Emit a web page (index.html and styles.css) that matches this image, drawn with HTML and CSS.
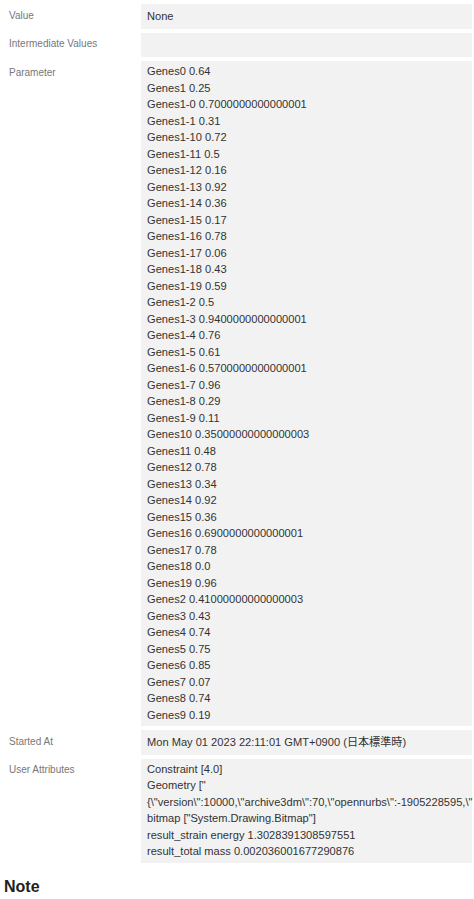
FILE: index.html
```html
<!DOCTYPE html>
<html lang="en">
<head>
<meta charset="utf-8">
<title>Trial</title>
<link rel="stylesheet" href="styles.css">
</head>
<body>
<div class="page">
  <div class="table">
    <div class="label">Value</div>
    <div class="cell"><div>None</div></div>

    <div class="label">Intermediate Values</div>
    <div class="cell"></div>

    <div class="label">Parameter</div>
    <div class="cell">
      <div>Genes0 0.64</div>
      <div>Genes1 0.25</div>
      <div>Genes1-0 0.7000000000000001</div>
      <div>Genes1-1 0.31</div>
      <div>Genes1-10 0.72</div>
      <div>Genes1-11 0.5</div>
      <div>Genes1-12 0.16</div>
      <div>Genes1-13 0.92</div>
      <div>Genes1-14 0.36</div>
      <div>Genes1-15 0.17</div>
      <div>Genes1-16 0.78</div>
      <div>Genes1-17 0.06</div>
      <div>Genes1-18 0.43</div>
      <div>Genes1-19 0.59</div>
      <div>Genes1-2 0.5</div>
      <div>Genes1-3 0.9400000000000001</div>
      <div>Genes1-4 0.76</div>
      <div>Genes1-5 0.61</div>
      <div>Genes1-6 0.5700000000000001</div>
      <div>Genes1-7 0.96</div>
      <div>Genes1-8 0.29</div>
      <div>Genes1-9 0.11</div>
      <div>Genes10 0.35000000000000003</div>
      <div>Genes11 0.48</div>
      <div>Genes12 0.78</div>
      <div>Genes13 0.34</div>
      <div>Genes14 0.92</div>
      <div>Genes15 0.36</div>
      <div>Genes16 0.6900000000000001</div>
      <div>Genes17 0.78</div>
      <div>Genes18 0.0</div>
      <div>Genes19 0.96</div>
      <div>Genes2 0.41000000000000003</div>
      <div>Genes3 0.43</div>
      <div>Genes4 0.74</div>
      <div>Genes5 0.75</div>
      <div>Genes6 0.85</div>
      <div>Genes7 0.07</div>
      <div>Genes8 0.74</div>
      <div>Genes9 0.19</div>
    </div>

    <div class="label">Started At</div>
    <div class="cell"><div>Mon May 01 2023 22:11:01 GMT+0900 (日本標準時)</div></div>

    <div class="label">User Attributes</div>
    <div class="cell">
      <div>Constraint [4.0]</div>
      <div>Geometry ["</div>
      <div class="nowrap">{\"version\":10000,\"archive3dm\":70,\"opennurbs\":-1905228595,\"</div>
      <div>bitmap ["System.Drawing.Bitmap"]</div>
      <div>result_strain energy 1.3028391308597551</div>
      <div>result_total mass 0.002036001677290876</div>
    </div>
  </div>
  <h3 class="note">Note</h3>
</div>
</body>
</html>
```

FILE: styles.css
```css
html, body {
  margin: 0;
  padding: 0;
  background: #ffffff;
  overflow-x: hidden;
}

body {
  font-family: "Liberation Sans", Arial, "Noto Sans CJK JP", sans-serif;
}

.page {
  padding: 4px 2px 0 4px;
}

.table {
  display: grid;
  grid-template-columns: 137px minmax(0, 1fr);
  row-gap: 4px;
}

.label {
  font-size: 10px;
  line-height: 16.5px;
  color: #777777;
  padding: 3.5px 5px 0 5px;
}

.cell {
  min-width: 0;
  min-height: 24.5px;
  box-sizing: border-box;
  background: #f2f2f2;
  color: #333333;
  font-size: 11.1px;
  line-height: 16.5px;
  padding: 2px 6px 3px 6px;
  display: flex;
  flex-direction: column;
  justify-content: center;
}

.nowrap {
  white-space: nowrap;
}

.note {
  margin: 14px 0 0 0;
  font-size: 16px;
  line-height: 20px;
  font-weight: bold;
  color: #222222;
}
```
